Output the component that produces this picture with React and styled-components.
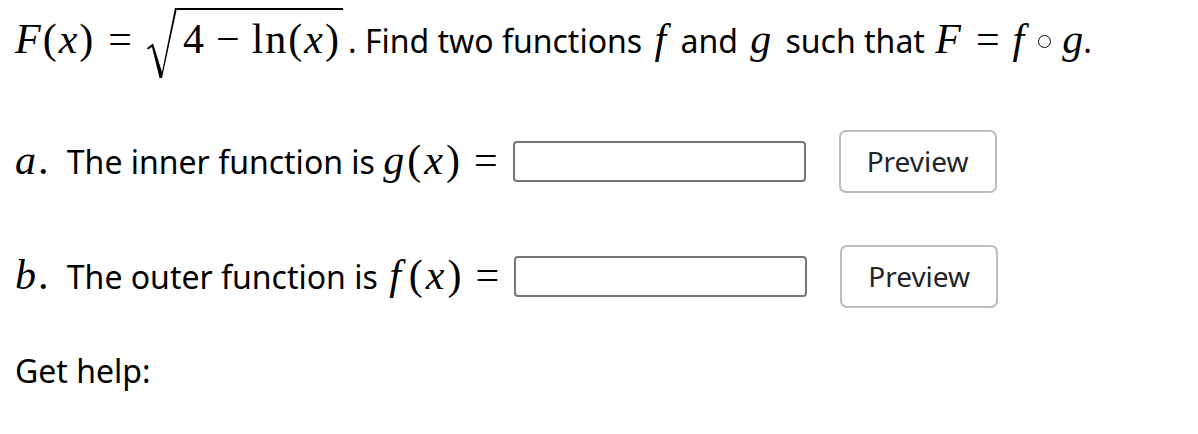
import React from "react";
import styled, { createGlobalStyle } from "styled-components";

const Global = createGlobalStyle`
  html, body { margin: 0; padding: 0; background: #fff; }
  body { font-family: "Noto Sans", "Open Sans", sans-serif; color: #000; }
`;

const Page = styled.div`
  padding: 8px 0 0 15px;
  font-size: 32px;
  line-height: 40px;
`;

const Prompt = styled.div`
  white-space: nowrap;
`;

const M = styled.span`
  display: inline-block;
  font-family: "Liberation Serif", "Times New Roman", serif;
  font-size: 42px;
  letter-spacing: ${(p) => p.$ls ?? 2}px;
  margin: 0 ${(p) => p.$mr || 0}px 0 ${(p) => p.$ml || 0}px;
  font-style: ${(p) => (p.$it ? "italic" : "normal")};
`;

const Op = styled.span`
  font-family: "Liberation Serif", "Times New Roman", serif;
  font-size: 42px;
  padding: 0 ${(p) => p.$pad || 11}px;
`;

const Compose = styled.span`
  display: inline-block;
  box-sizing: border-box;
  width: 13px;
  height: 13px;
  margin: 0 11px 0 10px;
  border: 1.8px solid #000;
  border-radius: 50%;
  vertical-align: 5px;
`;

const Sqrt = styled.span`
  display: inline-flex;
  align-items: flex-start;
  margin: 0 5px 0 2px;
`;

const Radical = styled.svg`
  flex: none;
  width: 30px;
  height: 70px;
  display: block;
`;

const Radicand = styled.span`
  align-self: baseline;
  border-top: 2.5px solid #000;
  padding: 5px 2px 0 6px;
  font-family: "Liberation Serif", "Times New Roman", serif;
  font-size: 42px;
  line-height: 48px;
  letter-spacing: 2px;
`;

const Row = styled.div`
  display: flex;
  align-items: center;
  height: 64px;
  margin-top: ${(p) => p.$mt}px;
  white-space: nowrap;
`;

const Label = styled.span`
  display: inline-block;
`;

const Input = styled.input`
  box-sizing: border-box;
  width: 293px;
  height: 41px;
  margin-left: 4px;
  border: 2px solid #767676;
  border-radius: 4px;
  background: #fff;
  outline: none;
`;

const Button = styled.button`
  box-sizing: border-box;
  width: 158px;
  height: 63px;
  margin-left: 33px;
  border: 2px solid #bcbcbc;
  border-radius: 7px;
  background: #fff;
  color: #212529;
  font-family: "Noto Sans", "Open Sans", sans-serif;
  font-size: 28px;
  cursor: pointer;
`;

const Help = styled.div`
  margin-top: 43px;
`;

const Gap = styled.span`
  display: inline-block;
  width: ${(p) => p.$w}px;
`;

export default function App() {
  return (
    <>
      <Global />
      <Page>
        <Prompt>
          <M $it>F</M>
          <M>(</M>
          <M $it>x</M>
          <M>)</M>
          <Op $pad={13}>=</Op>
          <Sqrt>
            <Radical viewBox="0 0 30 70" preserveAspectRatio="none">
              <polygon
                points="0,40 6,35.5 15,64 28,0 30,0 15,70 12.5,70 5,39 1,41.5"
                fill="#000"
              />
            </Radical>
            <Radicand>
              4<Op $pad={10}>−</Op>ln(<M $it>x</M>)
            </Radicand>
          </Sqrt>
          . Find two functions <M $it $ml={4} $mr={4}>f</M> and{" "}
          <M $it $ml={4} $mr={4}>g</M> such that <M $it $ml={2}>F</M>
          <Op $pad={13}>=</Op>
          <M $it $mr={2}>f</M>
          <Compose aria-label="∘" />
          <M $it $ls={0}>g</M>.
        </Prompt>

        <Row $mt={51}>
          <Label>
            <M $it>a</M>
            <M>.</M>
            <Gap $w={8} /> The inner function is{" "}
            <M $it $ls={3}>g</M>
            <M $ls={3}>(</M>
            <M $it $ls={3}>x</M>
            <M $ls={3}>)</M>
            <Op $pad={11}>=</Op>
          </Label>
          <Input aria-label="g(x)" />
          <Button>Preview</Button>
        </Row>

        <Row $mt={51}>
          <Label>
            <M $it>b</M>
            <M>.</M>
            <Gap $w={8} /> The outer function is{" "}
            <M $it $ml={3} $mr={6}>f</M>
            <M $ls={3}>(</M>
            <M $it $ls={3}>x</M>
            <M $ls={3}>)</M>
            <Op $pad={11}>=</Op>
          </Label>
          <Input aria-label="f(x)" />
          <Button>Preview</Button>
        </Row>

        <Help>Get help:</Help>
      </Page>
    </>
  );
}
